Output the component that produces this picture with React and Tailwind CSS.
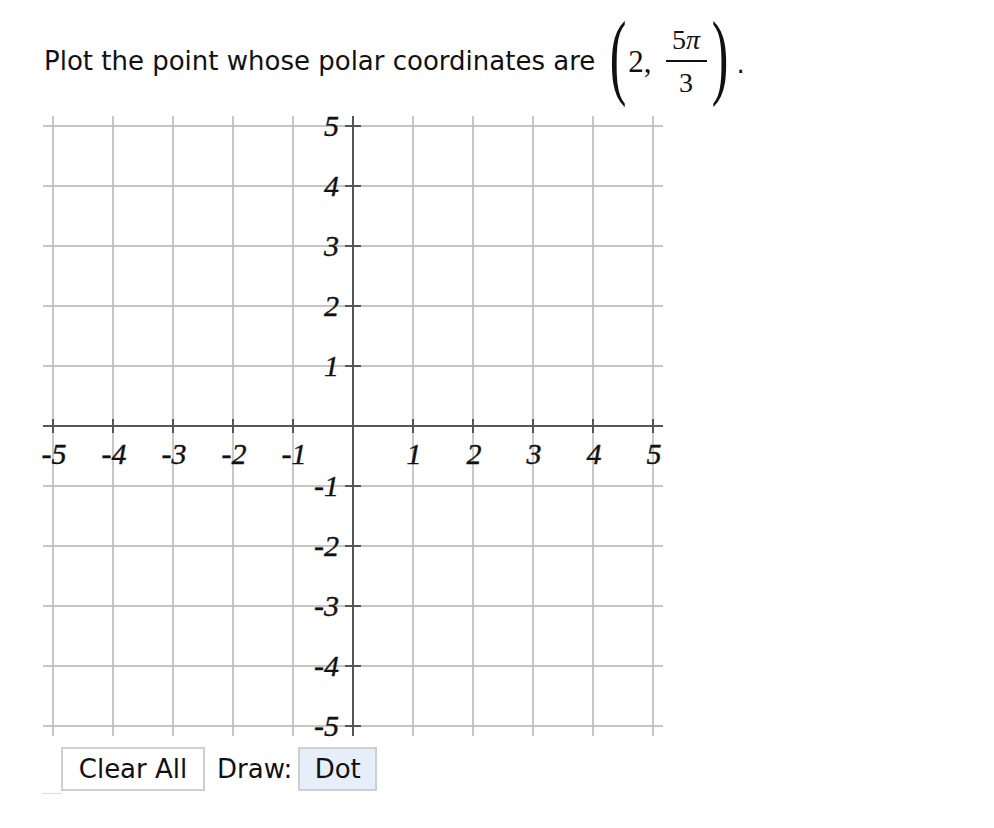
import React from 'react';

const TICKS = [-5, -4, -3, -2, -1, 0, 1, 2, 3, 4, 5];

// svg origin sits at page (40, 112)
const X0 = 313; // y axis
const Y0 = 314; // x axis
const STEP = 60;

const PolarGraph = () => {
  const gx = (n) => X0 + n * STEP;
  const gy = (n) => Y0 - n * STEP;

  return (
    <svg width="630" height="628" className="block overflow-visible">
      {/* grid */}
      {TICKS.map((n) => (
        <g key={'g' + n}>
          <line x1={gx(n)} y1={4} x2={gx(n)} y2={624} stroke="#b4b4b4" strokeWidth="1.5" />
          <line x1={3} y1={gy(n)} x2={623} y2={gy(n)} stroke="#b4b4b4" strokeWidth="1.5" />
        </g>
      ))}

      {/* axes */}
      <line x1={X0} y1={4} x2={X0} y2={624} stroke="#555" strokeWidth="2" />
      <line x1={3} y1={Y0} x2={623} y2={Y0} stroke="#555" strokeWidth="2" />

      {/* ticks */}
      {TICKS.map((n) => (
        <g key={'t' + n}>
          <line x1={gx(n)} y1={Y0 - 7} x2={gx(n)} y2={Y0 + 7} stroke="#555" strokeWidth="2" />
          <line x1={X0 - 8} y1={gy(n)} x2={X0 + 8} y2={gy(n)} stroke="#555" strokeWidth="2" />
        </g>
      ))}

      {/* labels */}
      <g
        className="font-[family-name:'Liberation_Serif',serif] italic text-[30px]"
        fill="#111"
        stroke="#111"
        strokeWidth="0.4"
      >
        {TICKS.filter((n) => n !== 0).map((n) => (
          <text key={'lx' + n} x={gx(n) + 1} y={Y0 + 38} textAnchor="middle">
            {n}
          </text>
        ))}
        {TICKS.filter((n) => n !== 0).map((n) => (
          <text key={'ly' + n} x={X0 - 14} y={gy(n) + 10} textAnchor="end">
            {n}
          </text>
        ))}
      </g>
    </svg>
  );
};

export default function App() {
  return (
    <div className="w-[994px] h-[828px] bg-white text-[#111] font-[family-name:'DejaVu_Sans',sans-serif]">
      {/* question */}
      <div className="flex items-center h-[102px] pt-5 pl-[44px] box-border">
        <span className="text-[26px] leading-none">Plot the point whose polar coordinates are</span>
        <span className="inline-flex items-center ml-[16px] font-[family-name:'Liberation_Serif',serif]">
          <span className="inline-block text-[96px] leading-none scale-x-[0.52] -translate-y-[6px] -mx-[9px]">(</span>
          <span className="text-[31px] leading-none ml-[3px]">2,</span>
          <span className="inline-flex flex-col items-center ml-[14px]">
            <span className="text-[28px] leading-none">
              5<span className="italic">π</span>
            </span>
            <span className="w-[41px] h-[2px] bg-[#111] mt-[6px] mb-[7px]" />
            <span className="text-[28px] leading-none">3</span>
          </span>
          <span className="inline-block text-[96px] leading-none scale-x-[0.52] -translate-y-[6px] -mx-[9px] ml-[-3px]">)</span>
        </span>
        <span className="text-[26px] leading-none ml-[10px] mt-[6px]">.</span>
      </div>

      {/* graph */}
      <div className="pl-[40px] mt-[10px]">
        <PolarGraph />
      </div>

      {/* controls */}
      <div className="flex items-center pl-[61px] mt-[7px]">
        <button className="w-[144px] h-[44px] flex items-center justify-center border-2 border-[#cfcfcf] bg-white text-[26px] leading-none">
          Clear All
        </button>
        <span className="ml-[12px] text-[26px] leading-none">Draw:</span>
        <button className="ml-[6px] w-[79px] h-[44px] flex items-center justify-center border-2 border-[#cfcfcf] bg-[#e6eff9] text-[26px] leading-none">
          Dot
        </button>
      </div>
      <div className="ml-[42px] mt-[2px] w-[20px] h-px bg-[#dcdcdc]" />
    </div>
  );
}
